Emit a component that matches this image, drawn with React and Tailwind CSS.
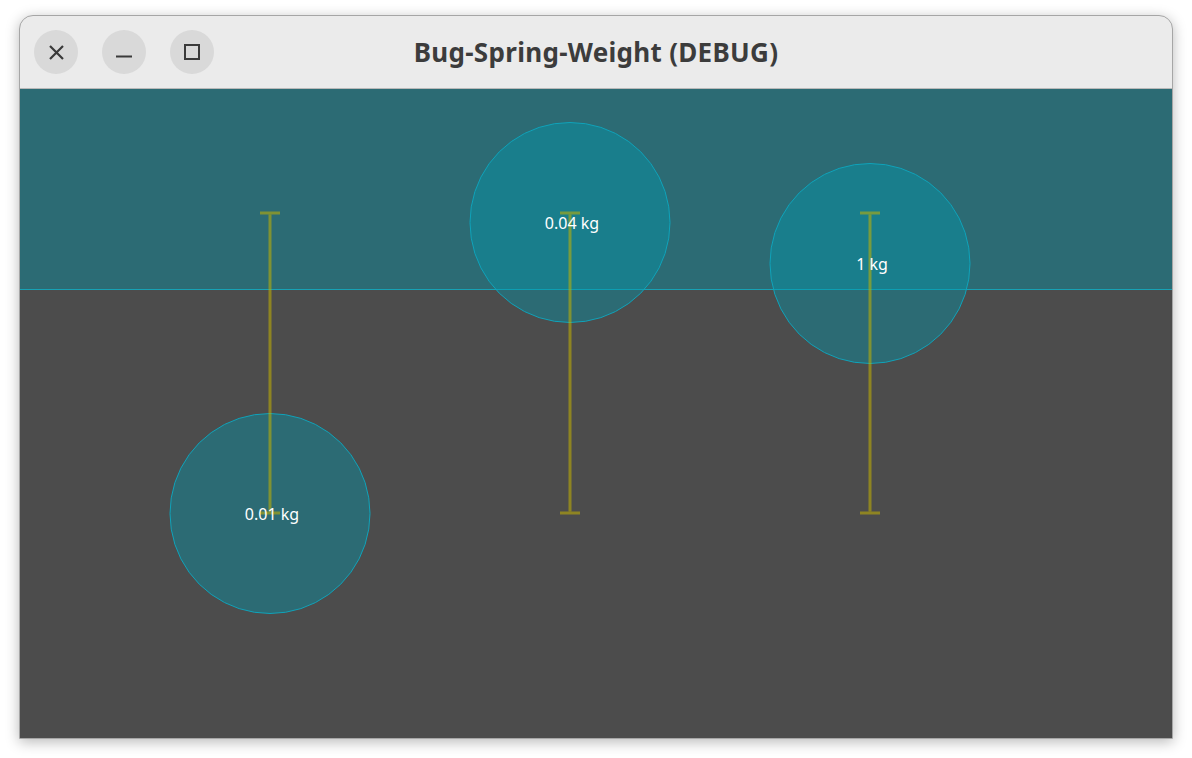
import React from "react";

function poly(cx, cy, r, n = 40) {
  const pts = [];
  for (let i = 0; i < n; i++) {
    const a = (i / n) * Math.PI * 2;
    pts.push(`${(cx + r * Math.cos(a)).toFixed(2)},${(cy + r * Math.sin(a)).toFixed(2)}`);
  }
  return pts.join(" ");
}

const weights = [
  { x: 250, cy: 424.5, label: "0.01 kg" },
  { x: 550, cy: 133.5, label: "0.04 kg" },
  { x: 850, cy: 174.5, label: "1 kg" },
];

function Btn({ children }) {
  return (
    <div className="w-[44px] h-[44px] rounded-full bg-[#d9d9d9] flex items-center justify-center text-[#3a3a3a]">
      {children}
    </div>
  );
}

export default function App() {
  return (
    <div className="w-[1192px] h-[758px] bg-white pt-[15px] pl-[19px]">
      <div className="w-[1154px] h-[724px] rounded-t-[14px] border border-[#a6a6a6] bg-[#ebebeb] shadow-[0_3px_14px_rgba(0,0,0,0.28)] flex flex-col overflow-hidden">
        <div className="relative h-[73px] shrink-0 border-b border-[#b9b9b9] flex items-center pl-[14px] gap-[24px]">
          <Btn>
            <svg width="17" height="17" viewBox="0 0 17 17">
              <path d="M2 2 L15 15 M15 2 L2 15" stroke="currentColor" strokeWidth="2.2" fill="none" />
            </svg>
          </Btn>
          <Btn>
            <svg width="16" height="16" viewBox="0 0 16 16">
              <path d="M0 12.5 H16" stroke="currentColor" strokeWidth="2" fill="none" />
            </svg>
          </Btn>
          <Btn>
            <svg width="16" height="16" viewBox="0 0 16 16">
              <rect x="1" y="1" width="14" height="14" stroke="currentColor" strokeWidth="2" fill="none" />
            </svg>
          </Btn>
          <div className="absolute inset-0 flex items-center justify-center pointer-events-none">
            <span className="text-[26px] font-bold text-[#3c3c3c] tracking-[0.3px]" style={{ fontFamily: '"Noto Sans", "Open Sans", sans-serif' }}>
              Bug-Spring-Weight (DEBUG)
            </span>
          </div>
        </div>
        <div className="relative flex-1 bg-[#4c4c4c]">
          <div className="h-[201px] bg-[rgba(0,152,174,0.41)] border-b border-[#17a2b5]" />
          <svg className="absolute inset-0" width="1152" height="649" viewBox="0 0 1152 649">
            {weights.map((w) => (
              <polygon key={w.label} points={poly(w.x, w.cy, 100)} fill="rgba(0,152,174,0.41)" stroke="#0fa3ba" strokeWidth="1" />
            ))}
            {weights.map((w) => (
              <g key={"l" + w.label} stroke="rgba(196,178,0,0.55)" strokeWidth="3" fill="none">
                <path d={`M${w.x} 125.5 V422.5`} />
                <path d={`M${w.x - 10} 124 H${w.x + 10}`} />
                <path d={`M${w.x - 10} 424 H${w.x + 10}`} />
              </g>
            ))}
            {weights.map((w) => (
              <text key={"t" + w.label} x={w.x + 2} y={w.cy + 6} textAnchor="middle" fill="#ffffff" fontSize="16" style={{ fontFamily: '"Noto Sans", "Open Sans", sans-serif' }}>
                {w.label}
              </text>
            ))}
          </svg>
        </div>
      </div>
    </div>
  );
}
